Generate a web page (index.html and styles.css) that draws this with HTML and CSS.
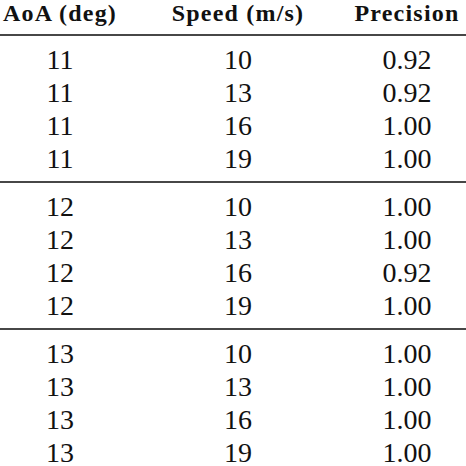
FILE: index.html
```html
<!DOCTYPE html>
<html lang="en">
<head>
<meta charset="utf-8">
<title>AoA / Speed / Precision</title>
<link rel="stylesheet" href="styles.css">
</head>
<body>
<div class="table">
  <div class="row head">
    <div class="cell">AoA (deg)</div>
    <div class="cell">Speed (m/s)</div>
    <div class="cell">Precision</div>
  </div>
  <div class="group">
    <div class="row"><div class="cell">11</div><div class="cell">10</div><div class="cell">0.92</div></div>
    <div class="row"><div class="cell">11</div><div class="cell">13</div><div class="cell">0.92</div></div>
    <div class="row"><div class="cell">11</div><div class="cell">16</div><div class="cell">1.00</div></div>
    <div class="row"><div class="cell">11</div><div class="cell">19</div><div class="cell">1.00</div></div>
  </div>
  <div class="group">
    <div class="row"><div class="cell">12</div><div class="cell">10</div><div class="cell">1.00</div></div>
    <div class="row"><div class="cell">12</div><div class="cell">13</div><div class="cell">1.00</div></div>
    <div class="row"><div class="cell">12</div><div class="cell">16</div><div class="cell">0.92</div></div>
    <div class="row"><div class="cell">12</div><div class="cell">19</div><div class="cell">1.00</div></div>
  </div>
  <div class="group">
    <div class="row"><div class="cell">13</div><div class="cell">10</div><div class="cell">1.00</div></div>
    <div class="row"><div class="cell">13</div><div class="cell">13</div><div class="cell">1.00</div></div>
    <div class="row"><div class="cell">13</div><div class="cell">16</div><div class="cell">1.00</div></div>
    <div class="row"><div class="cell">13</div><div class="cell">19</div><div class="cell">1.00</div></div>
  </div>
</div>
</body>
</html>
```
FILE: styles.css
```css
html, body {
  margin: 0;
  padding: 0;
  background: #ffffff;
  overflow: hidden;
  width: 466px;
  height: 466px;
}

.table {
  margin-left: -4px;
  width: 470px;
  font-family: "Liberation Serif", "DejaVu Serif", serif;
  color: #111111;
}

.row {
  display: grid;
  grid-template-columns: 128px 228px 110px;
  font-size: 28px;
  line-height: 33px;
}

.cell {
  text-align: center;
  white-space: nowrap;
}

.head {
  font-size: 24px;
  font-weight: bold;
  letter-spacing: 1.2px;
  line-height: 27px;
  box-sizing: border-box;
  height: 36px;
  padding-bottom: 7px;
  border-bottom: 2px solid #474747;
}

.group {
  padding: 6.5px 0;
}

.group + .group {
  border-top: 2px solid #474747;
}
```
